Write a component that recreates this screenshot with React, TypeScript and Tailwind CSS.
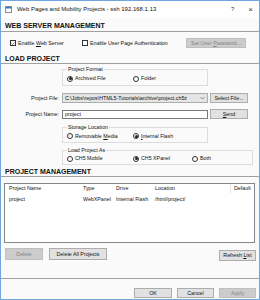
import React from "react";

const Check = ({ checked }: { checked?: boolean }) => (
  <span className="w-[6px] h-[6px] border border-[#333] bg-white flex items-center justify-center shrink-0">
    {checked && (
      <svg width="5" height="5" viewBox="0 0 10 10">
        <path d="M1.5 5.2 L4 7.6 L8.6 2.4" fill="none" stroke="#222" strokeWidth="1.4" />
      </svg>
    )}
  </span>
);

const Radio = ({ checked }: { checked?: boolean }) => (
  <span className="w-[6px] h-[6px] rounded-full border border-[#333] bg-white flex items-center justify-center shrink-0">
    {checked && <span className="w-[3px] h-[3px] rounded-full bg-[#222]" />}
  </span>
);

const Option = ({ checked, children, className = "" }: { checked?: boolean; children: React.ReactNode; className?: string }) => (
  <div className={`flex items-center gap-[2px] ${className}`}>
    <Radio checked={checked} />
    <span>{children}</span>
  </div>
);

const Btn = ({ children, className = "", disabled }: { children: React.ReactNode; className?: string; disabled?: boolean }) => (
  <div
    className={`h-[10px] flex items-center justify-center whitespace-nowrap border ${
      disabled ? "bg-[#cccccc] border-[#bfbfbf] text-[#838383]" : "bg-[#e1e1e1] border-[#adadad]"
    } ${className}`}
  >
    {children}
  </div>
);

const Group = ({ label, className = "", children }: { label: string; className?: string; children: React.ReactNode }) => (
  <div className={`relative border border-[#dcdcdc] flex items-center px-[4px] ${className}`}>
    <span className="absolute left-[4px] top-[-4px] bg-[#fafafa] px-[1px] leading-[7px]">{label}</span>
    {children}
  </div>
);

const U = ({ children }: { children: React.ReactNode }) => <span className="underline">{children}</span>;

export default function App() {
  return (
    <div className="w-[260px] h-[300px] border border-[#6ea6dd] bg-[#fafafa] flex flex-col overflow-hidden text-[#111] text-[5.3px] leading-[7px] font-['Liberation_Sans',Arial,sans-serif]">
      {/* title bar */}
      <div className="h-[17px] bg-white flex items-center pl-[4px] pr-[6px] text-[6px] shrink-0">
        <svg width="7" height="7" viewBox="0 0 7 7" className="shrink-0">
          <rect x="0.5" y="0.5" width="6" height="6" fill="#fff" stroke="#8a8a8a" />
          <rect x="1" y="1" width="5" height="1.5" fill="#3a78c2" />
        </svg>
        <span className="ml-[5px]">Web Pages and Mobility Projects - ssh 192.168.1.13</span>
        <span className="ml-auto mr-[14px] text-[#333]">?</span>
        <span className="text-[#333] text-[8px]">×</span>
      </div>

      {/* web server management */}
      <div className="mt-[4px] pl-[4px] pb-[1px] font-bold text-[7px] leading-[8px] border-b border-[#a0a0a0]">WEB SERVER MANAGEMENT</div>
      <div className="mt-[6px] h-[10px] flex items-center pl-[9px]">
        <div className="flex items-center gap-[2px] w-[72px]">
          <Check checked />
          <span>Enable <U>W</U>eb Server</span>
        </div>
        <div className="flex items-center gap-[2px]">
          <Check />
          <span>Enable User Page Authentication</span>
        </div>
        <Btn disabled className="ml-auto mr-[13px] w-[60px]">
          <span>Set User <U>P</U>assword...</span>
        </Btn>
      </div>

      {/* load project */}
      <div className="mt-[7px] pl-[4px] font-bold text-[7px] leading-[8px] border-b border-[#a0a0a0]">LOAD PROJECT</div>
      <div className="flex flex-col pl-[61px]">
        <Group label="Project Format" className="mt-[5px] w-[146px] h-[17px] pt-[2px]">
          <Option checked className="w-[66px]">Archived File</Option>
          <Option>Folder</Option>
        </Group>

        <div className="mt-[7px] flex items-center h-[10px] relative">
          <span className="absolute right-full mr-[3px] whitespace-nowrap">Project File:</span>
          <div className="w-[146px] h-[10px] border border-[#acacac] bg-[#e5e5e5] flex items-center pl-[2px] pr-[2px]">
            <span className="whitespace-nowrap overflow-hidden">C:\Jobs\repos\HTML5-Tutorials\archive\project.ch5z</span>
            <svg width="5" height="4" viewBox="0 0 10 6" className="ml-auto shrink-0">
              <path d="M1 1 L5 5 L9 1" fill="none" stroke="#555" strokeWidth="1.2" />
            </svg>
          </div>
          <Btn className="ml-[2px] w-[38px]">Select File...</Btn>
        </div>

        <div className="mt-[6px] flex items-center h-[10px] relative">
          <span className="absolute right-full mr-[3px] whitespace-nowrap">Project Name:</span>
          <div className="w-[146px] h-[9px] border border-[#7a7a7a] bg-white flex items-center pl-[2px]">project</div>
          <Btn className="ml-[2px] w-[38px] border-[#0078d7]">
            <U>S</U>end
          </Btn>
        </div>

        <Group label="Storage Location" className="mt-[8px] w-[146px] h-[16px] pt-[2px]">
          <Option className="w-[66px]">
            Removable <U>M</U>edia
          </Option>
          <Option checked>
            <U>I</U>nternal Flash
          </Option>
        </Group>

        <Group label="Load Project As" className="mt-[7px] w-[191px] h-[15px] pt-[2px]">
          <Option className="w-[66px]">CH5 Mobile</Option>
          <Option checked className="w-[59px]">CH5 XPanel</Option>
          <Option>Both</Option>
        </Group>
      </div>

      {/* project management */}
      <div className="mt-[3px] pl-[4px] font-bold text-[7px] leading-[8px] border-b border-[#a0a0a0]">PROJECT MANAGEMENT</div>
      <div className="mt-[6px] ml-[3px] w-[251px] h-[60px] border border-[#828790] bg-white">
        <div className="grid grid-cols-[75px_34px_38px_78px_1fr] h-[9px] items-center">
          <span className="pl-[4px]">Project Name</span>
          <span className="pl-[3px]">Type</span>
          <span className="pl-[2px]">Drive</span>
          <span className="pl-[3px]">Location</span>
          <span className="pl-[3px] h-full flex items-center border-l border-[#e5e5e5]">Default</span>
        </div>
        <div className="grid grid-cols-[75px_34px_38px_78px_1fr] mt-[2px] h-[8px] items-center">
          <span className="pl-[4px]">project</span>
          <span className="pl-[3px]">WebXPanel</span>
          <span className="pl-[2px] whitespace-nowrap">Internal Flash</span>
          <span className="pl-[3px]">/html/project/</span>
          <span />
        </div>
      </div>

      <div className="mt-[5px] flex items-start pl-[4px] pr-[3px]">
        <Btn disabled className="w-[38px] h-[12px]">Delete</Btn>
        <Btn className="ml-[6px] w-[58px] h-[12px]">Delete All Projects</Btn>
        <Btn className="ml-auto mt-[2px] w-[37px] h-[11px]">
          <span>Refresh&nbsp;<U>L</U>ist</span>
        </Btn>
      </div>

      <div className="mt-auto border-t border-[#a0a0a0]" />
      <div className="mt-[9px] mb-[1px] flex justify-end gap-[5px] pr-[3px]">
        <Btn className="w-[38px] h-[10px]">OK</Btn>
        <Btn className="w-[37px] h-[10px]">Cancel</Btn>
        <Btn disabled className="w-[37px] h-[10px]">Apply</Btn>
      </div>
    </div>
  );
}
